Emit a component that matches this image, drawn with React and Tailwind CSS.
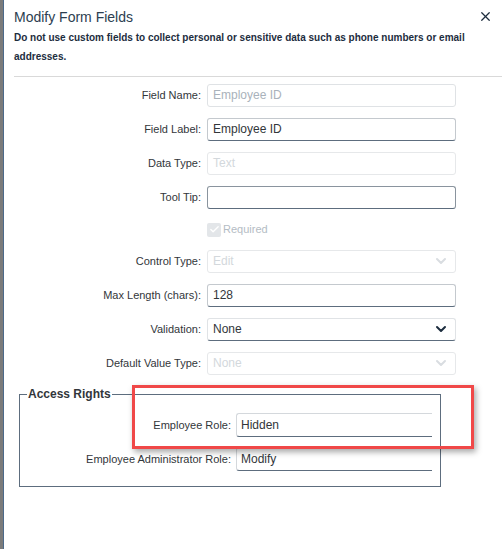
import { X, ChevronDown, Check } from "lucide-react";

const ROWS = [
  { label: "Field Name:", value: "Employee ID", kind: "readonly" },
  { label: "Field Label:", value: "Employee ID", kind: "edit" },
  { label: "Data Type:", value: "Text", kind: "disabled" },
  { label: "Tool Tip:", value: "", kind: "focus" },
  { kind: "checkbox", value: "Required" },
  { label: "Control Type:", value: "Edit", kind: "disabledSelect" },
  { label: "Max Length (chars):", value: "128", kind: "edit" },
  { label: "Validation:", value: "None", kind: "select" },
  { label: "Default Value Type:", value: "None", kind: "disabledSelect" },
];

function Field({ row }) {
  if (row.kind === "checkbox") {
    return (
      <div className="flex h-[30px] items-center pl-[203px] pt-[1px]">
        <span className="flex h-[14px] w-[14px] items-center justify-center rounded-[2px] bg-[#e3e6e9]">
          <Check size={11} strokeWidth={3} className="text-white" />
        </span>
        <span className="ml-[2px] text-[11px] text-[#b4bcc4]">{row.value}</span>
      </div>
    );
  }

  const box = {
    readonly: "border-[#dfe2e5] text-[#a9b2bb]",
    edit: "border-[#c4c9ce] border-b-[#5d6d7e] text-[#32363a]",
    disabled: "border-[#e6e8ea] text-[#d3d8dc]",
    focus: "border-[#8a949e] border-b-[#5d6d7e] text-[#32363a]",
    select: "border-[#e0e3e6] border-b-[#5d6d7e] text-[#32363a]",
    disabledSelect: "border-[#e6e8ea] text-[#d3d8dc]",
  }[row.kind];

  return (
    <div className="flex h-[34px] items-center">
      <span className="w-[198px] pr-[1px] text-right text-[11px] text-[#32363a]">{row.label}</span>
      <div className={`ml-[5px] flex h-[23px] w-[249px] items-center justify-between rounded-[3px] border pl-[5px] pr-[6px] text-[12px] ${box}`}>
        <span>{row.value}</span>
        {row.kind === "select" && <ChevronDown size={16} strokeWidth={3} className="text-[#1d2d3e]" />}
        {row.kind === "disabledSelect" && <ChevronDown size={16} strokeWidth={3} className="text-[#d9dde1]" />}
      </div>
    </div>
  );
}

function RoleRow({ label, value }) {
  return (
    <div className="flex h-[34px] items-center">
      <span className="w-[211px] text-right text-[11px] text-[#32363a]">{label}</span>
      <div className="ml-[5px] flex h-[24px] w-[196px] items-center rounded-l-[3px] border-y border-l border-[#d4d8dc] border-b-[#5d6d7e] pl-[4px] text-[12px] text-[#32363a]">
        {value}
      </div>
    </div>
  );
}

export default function App() {
  return (
    <div className="relative flex h-[549px] w-[502px] overflow-hidden bg-white font-['Liberation_Sans',Arial,sans-serif]">
      <div className="w-[4px] border-r border-[#4d6a8a] bg-[#7b7b7b]" />

      <div className="flex-1 bg-white">
        <div className="flex items-start justify-between pl-[10px] pr-[9px] pt-[7px]">
          <h1 className="text-[14px] text-[#2c3e50]">Modify Form Fields</h1>
          <X size={15} strokeWidth={2} className="mt-[2px] text-[#1d2d3e]" />
        </div>
        <p className="w-[470px] pl-[10px] text-[10px] font-bold leading-[19px] text-[#1d2d3e]">
          Do not use custom fields to collect personal or sensitive data such as phone numbers or email addresses.
        </p>
        <div className="ml-[10px] mt-[10px] border-t border-[#d9d9d9]" />

        <div className="pt-[1px]">
          {ROWS.map((row, i) => (
            <Field key={i} row={row} />
          ))}
        </div>

        <fieldset className="ml-[15px] mt-[7px] w-[422px] border border-[#5d6d7e] pb-[10px] pt-[7px]">
          <legend className="ml-[7px] px-[1px] text-[12px] font-bold leading-[14px] text-[#32363a]">Access Rights</legend>
          <RoleRow label="Employee Role:" value="Hidden" />
          <RoleRow label="Employee Administrator Role:" value="Modify" />
        </fieldset>
      </div>

      <div className="absolute left-[132px] top-[385px] h-[64px] w-[342px] border-[3px] border-[#f04848] shadow-[2px_3px_6px_rgba(0,0,0,0.35)]" />
    </div>
  );
}
